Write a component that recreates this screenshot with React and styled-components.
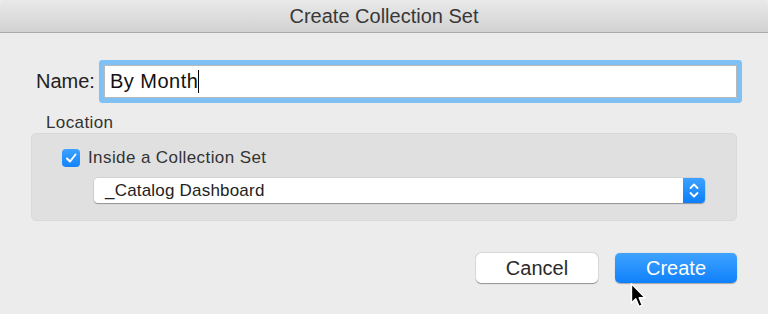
import React from "react";
import styled, { createGlobalStyle } from "styled-components";

const Global = createGlobalStyle`
  html, body { margin: 0; padding: 0; background: #ececec; }
  body { font-family: "Liberation Sans", Arial, sans-serif; }
`;

const Window = styled.div`
  position: relative;
  width: 768px;
  height: 314px;
  background: #ececec;
  border-radius: 6px 6px 0 0;
  overflow: hidden;
  color: #222;
`;

const TitleBar = styled.div`
  height: 32px;
  display: flex;
  align-items: center;
  justify-content: center;
  background: linear-gradient(#e9e9e9, #d2d2d2);
  border-bottom: 1px solid #acacac;
  font-size: 20px;
  color: #383838;
`;

const Body = styled.div`
  padding: 32px 31px 0 31px;
  display: flex;
  flex-direction: column;
`;

const NameRow = styled.div`
  display: flex;
  align-items: center;
  gap: 9px;
  padding-left: 5px;
`;

const Label = styled.span`
  font-size: 20px;
  color: #222;
`;

const Field = styled.div`
  flex: 1;
  height: 31px;
  background: #fff;
  border: 1px solid #b9b9b9;
  box-shadow: 0 0 0 5px #7fc1f4;
  border-radius: 1px;
  display: flex;
  align-items: center;
  padding-left: 5px;
  font-size: 20px;
  letter-spacing: 0.5px;
  color: #111;
`;

const Caret = styled.span`
  display: inline-block;
  width: 1px;
  height: 23px;
  background: #000;
`;

const SectionTitle = styled.div`
  margin: 15px 0 0 15px;
  font-size: 17px;
  letter-spacing: 0.4px;
  color: #333;
  line-height: 20px;
`;

const Group = styled.div`
  height: 88px;
  background: #e0e0e0;
  border: 1px solid #d9d9d9;
  border-radius: 5px;
  box-sizing: border-box;
  padding: 14px 31px 0 30px;
  display: flex;
  flex-direction: column;
`;

const CheckRow = styled.div`
  display: flex;
  align-items: center;
  gap: 8px;
  font-size: 17px;
  letter-spacing: 0.4px;
  color: #333;
`;

const CheckBox = styled.span`
  width: 18px;
  height: 18px;
  border-radius: 4px;
  background: linear-gradient(#3da2ff, #1383fb);
  display: flex;
  align-items: center;
  justify-content: center;
`;

const Popup = styled.div`
  margin: 10px 0 0 32px;
  height: 25px;
  display: flex;
  background: #fff;
  border-radius: 4px;
  box-shadow: 0 1px 1px rgba(0, 0, 0, 0.3), 0 0 0 0.5px rgba(0, 0, 0, 0.12);
  overflow: hidden;
`;

const PopupText = styled.div`
  flex: 1;
  display: flex;
  align-items: center;
  padding-left: 11px;
  font-size: 17px;
  letter-spacing: 0.2px;
  color: #222;
`;

const Stepper = styled.div`
  width: 22px;
  background: linear-gradient(#3da2ff, #0d7ffa);
  display: flex;
  align-items: center;
  justify-content: center;
`;

const Buttons = styled.div`
  margin-top: 32px;
  display: flex;
  justify-content: flex-end;
  gap: 17px;
`;

const Button = styled.button`
  width: 122px;
  height: 30px;
  border-radius: 5px;
  border: none;
  font-family: inherit;
  font-size: 20px;
  padding: 0;
  color: ${(p) => (p.$primary ? "#fff" : "#2a2a2a")};
  background: ${(p) =>
    p.$primary ? "linear-gradient(#3fa3ff, #0f80fb)" : "#fff"};
  box-shadow: ${(p) =>
    p.$primary
      ? "0 0.5px 1px rgba(0,0,0,0.3)"
      : "0 0.5px 1px rgba(0,0,0,0.35), 0 0 0 0.5px rgba(0,0,0,0.1)"};
`;

const Cursor = styled.svg`
  position: absolute;
  left: 629px;
  top: 282px;
`;

export default function App() {
  return (
    <>
      <Global />
      <Window>
        <TitleBar>Create Collection Set</TitleBar>
        <Body>
          <NameRow>
            <Label>Name:</Label>
            <Field>
              By Month
              <Caret />
            </Field>
          </NameRow>
          <SectionTitle>Location</SectionTitle>
          <Group>
            <CheckRow>
              <CheckBox>
                <svg width="12" height="12" viewBox="0 0 12 12">
                  <path
                    d="M2 6.5 L5 9.5 L10.5 2.5"
                    fill="none"
                    stroke="#fff"
                    strokeWidth="2"
                    strokeLinecap="round"
                    strokeLinejoin="round"
                  />
                </svg>
              </CheckBox>
              Inside a Collection Set
            </CheckRow>
            <Popup>
              <PopupText>_Catalog Dashboard</PopupText>
              <Stepper>
                <svg width="10" height="17" viewBox="0 0 10 17">
                  <path
                    d="M1.5 6 L5 2.5 L8.5 6 M1.5 11 L5 14.5 L8.5 11"
                    fill="none"
                    stroke="#fff"
                    strokeWidth="1.8"
                    strokeLinecap="round"
                    strokeLinejoin="round"
                  />
                </svg>
              </Stepper>
            </Popup>
          </Group>
          <Buttons>
            <Button>Cancel</Button>
            <Button $primary>Create</Button>
          </Buttons>
        </Body>
        <Cursor width="20" height="28" viewBox="0 0 16 24">
          <path
            d="M1.5 1.5 L1.5 18 L5.3 14.5 L8 21 L10.8 19.8 L8.2 13.5 L13.3 13.5 Z"
            fill="#000"
            stroke="#fff"
            strokeWidth="1.3"
            strokeLinejoin="round"
          />
        </Cursor>
      </Window>
    </>
  );
}
